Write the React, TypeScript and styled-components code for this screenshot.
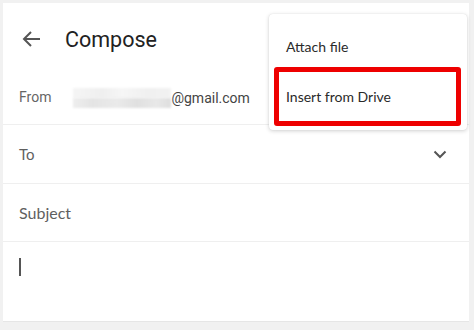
import React from "react";
import styled, { createGlobalStyle } from "styled-components";

const Global = createGlobalStyle`
  html, body { margin: 0; padding: 0; background: #f1f1f1; }
  body { width: 474px; height: 330px; overflow: hidden; }
  * { box-sizing: border-box; }
`;

const Frame = styled.div`
  padding: 3px 5px 8px 3px;
  width: 474px;
  height: 330px;
`;

const Panel = styled.div`
  position: relative;
  background: #fff;
  width: 466px;
  height: 319px;
  display: flex;
  flex-direction: column;
  border-bottom: 1px solid #e6e6e6;
`;

const Header = styled.div`
  height: 66px;
  display: flex;
  align-items: center;
  padding-left: 17px;
  padding-top: 6px;
`;

const Title = styled.h1`
  margin: 0 0 0 21px;
  font-family: Roboto, "Liberation Sans", sans-serif;
  font-size: 21.5px;
  font-weight: 400;
  color: #222;
`;

const Row = styled.div<{ $h: number; $divider?: boolean }>`
  height: ${(p) => p.$h}px;
  display: flex;
  align-items: center;
  padding: 0 22px 0 16px;
  border-bottom: ${(p) => (p.$divider ? "1px solid #efefef" : "none")};
`;

const Label = styled.span<{ $size: number; $font?: string; $color?: string }>`
  font-family: ${(p) => p.$font || "Lato"}, "Liberation Sans", sans-serif;
  font-size: ${(p) => p.$size}px;
  color: ${(p) => p.$color || "#5f5f5f"};
`;

const Spacer = styled.div`
  flex: 1;
`;

const Blur = styled.div`
  width: 98px;
  height: 20px;
  margin-left: 22px;
  margin-top: 2px;
  display: grid;
  grid-template-rows: 10px 10px;
`;

const BlurStrip = styled.div<{ $bg: string }>`
  background: ${(p) => p.$bg};
  filter: blur(1px);
`;

const Email = styled.span`
  font-family: Roboto, "Liberation Sans", sans-serif;
  font-size: 14px;
  color: #444;
  margin-top: 2px;
`;

const Body = styled.div`
  flex: 1;
  padding: 16px 0 0 16px;
`;

const Caret = styled.div`
  width: 2px;
  height: 18px;
  background: #555;
`;

const Menu = styled.div`
  position: absolute;
  left: 266px;
  top: 11px;
  width: 198px;
  height: 116px;
  background: #fff;
  border-radius: 4px;
  box-shadow: 0 1px 4px rgba(0, 0, 0, 0.18), 0 0 1px rgba(0, 0, 0, 0.12);
  padding: 12px 6px 3px 5px;
  display: flex;
  flex-direction: column;
`;

const MenuItem = styled.div<{ $highlight?: boolean }>`
  height: ${(p) => (p.$highlight ? 59 : 41)}px;
  display: flex;
  align-items: center;
  padding-left: ${(p) => (p.$highlight ? 7 : 12)}px;
  border: ${(p) => (p.$highlight ? "5px solid #ee0000" : "none")};
  border-radius: ${(p) => (p.$highlight ? 3 : 0)}px;
  font-family: Lato, "Liberation Sans", sans-serif;
  font-size: 14px;
  color: #2a2a2a;
`;

const BackArrow = () => (
  <svg width="24" height="24" viewBox="0 0 24 24" fill="none">
    <path d="M20 12H4.5M11 5l-7 7 7 7" stroke="#555" strokeWidth="2" strokeLinecap="butt" />
  </svg>
);

const Chevron = () => (
  <svg width="14" height="10" viewBox="0 0 14 10" fill="none">
    <path d="M1.5 2.5L7 8l5.5-5.5" stroke="#555" strokeWidth="2" />
  </svg>
);

export default function App() {
  return (
    <>
      <Global />
      <Frame>
        <Panel>
          <Header>
            <BackArrow />
            <Title>Compose</Title>
          </Header>
          <Row $h={56} $divider>
            <Label $size={14} $font="Roboto" $color="#666">From</Label>
            <Blur>
              <BlurStrip $bg="linear-gradient(90deg,#f5f5f5 0%,#efefef 30%,#f6f6f6 50%,#f0f0f0 75%,#f2f2f2 100%)" />
              <BlurStrip $bg="linear-gradient(90deg,#eeeeee 0%,#e4e4e4 20%,#eaeaea 45%,#e0e0e0 65%,#e8e8e8 85%,#dedede 100%)" />
            </Blur>
            <Email>@gmail.com</Email>
          </Row>
          <Row $h={59} $divider>
            <Label $size={15}>To</Label>
            <Spacer />
            <Chevron />
          </Row>
          <Row $h={58} $divider>
            <Label $size={16}>Subject</Label>
          </Row>
          <Body>
            <Caret />
          </Body>
          <Menu>
            <MenuItem>Attach file</MenuItem>
            <MenuItem $highlight>Insert from Drive</MenuItem>
          </Menu>
        </Panel>
      </Frame>
    </>
  );
}
